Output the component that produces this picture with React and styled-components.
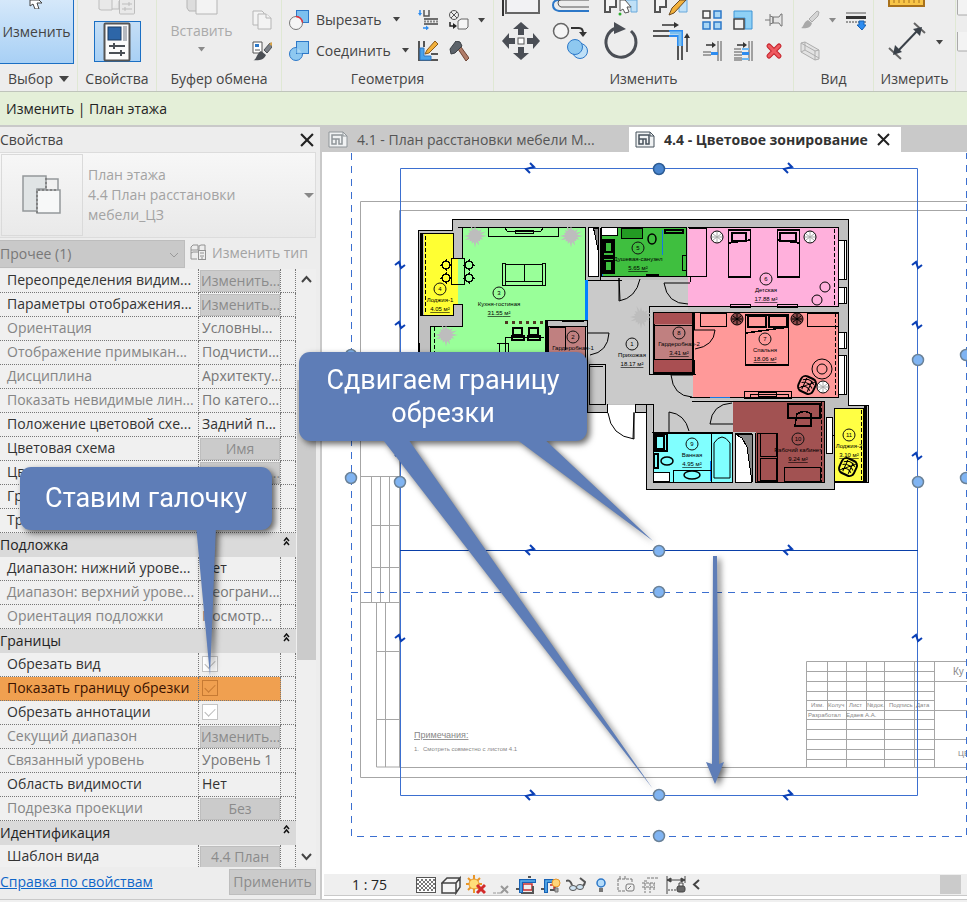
import React from 'react';
import styled, { createGlobalStyle, css } from 'styled-components';

const properties = [
	{ name: 'Переопределения видим...', button: 'Изменить...' },
	{ name: 'Параметры отображения...', button: 'Изменить...' },
	{ name: 'Ориентация', value: 'Условны...', muted: true },
	{ name: 'Отображение примыкан...', value: 'Подчисти...', muted: true },
	{ name: 'Дисциплина', value: 'Архитекту...', muted: true },
	{ name: 'Показать невидимые лин...', value: 'По катего...', muted: true },
	{ name: 'Положение цветовой схе...', value: 'Задний п...' },
	{ name: 'Цветовая схема', button: 'Имя' },
	{ name: 'Цветовые схемы', button: 'Изменить...' },
	{ name: 'Графика', value: '' },
	{ name: 'Траектория солнца', value: '' },
	{ group: 'Подложка' },
	{ name: 'Диапазон: нижний урове...', value: 'Нет' },
	{ name: 'Диапазон: верхний урове...', value: 'Неограни...', muted: true },
	{ name: 'Ориентация подложки', value: 'Посмотр...', muted: true },
	{ group: 'Границы' },
	{ name: 'Обрезать вид', check: true },
	{ name: 'Показать границу обрезки', check: true, active: true },
	{ name: 'Обрезать аннотации', check: true },
	{ name: 'Секущий диапазон', button: 'Изменить...', muted: true },
	{ name: 'Связанный уровень', value: 'Уровень 1', muted: true },
	{ name: 'Область видимости', value: 'Нет' },
	{ name: 'Подрезка проекции', button: 'Без', muted: true },
	{ group: 'Идентификация' },
	{ name: 'Шаблон вида', button: '4.4 План' },
];

const rooms = [
	{ id: 1, x: 632, y: 344, name: 'Прихожая', area: '18.17' },
	{ id: 2, x: 573, y: 337, name: 'Гардеробная-1', area: '2.90' },
	{ id: 3, x: 499, y: 293, name: 'Кухня-гостиная', area: '31.55' },
	{ id: 4, x: 440, y: 289, name: 'Лоджия-1', area: '4.05' },
	{ id: 5, x: 638, y: 248, name: 'Душевая-санузел', area: '5.65' },
	{ id: 6, x: 766, y: 279, name: 'Детская', area: '17.88' },
	{ id: 7, x: 765, y: 339, name: 'Спальня', area: '18.06' },
	{ id: 8, x: 679, y: 333, name: 'Гардеробная-2', area: '3.41' },
	{ id: 9, x: 692, y: 444, name: 'Ванная', area: '4.95' },
	{ id: 10, x: 798, y: 439, name: 'Рабочий кабинет', area: '9.24' },
	{ id: 11, x: 849, y: 435, name: 'Лоджия-2', area: '3.10' },
];

const grips = [
	[659, 551], [659, 592], [659, 795], [659, 836], [351, 355], [351, 478],
	[400, 482], [918, 360], [918, 482], [966, 355], [966, 478],
];

const starPoints = (cx, cy, r) =>
	Array.from({ length: 32 }, (_, i) => {
		const len = i % 2 ? r * 0.5 : r * (0.8 + 0.2 * Math.cos(i * 2.3));
		const a = (i * Math.PI) / 16;
		return `${(cx + len * Math.cos(a)).toFixed(1)},${(cy + len * Math.sin(a)).toFixed(1)}`;
	}).join(' ');

/* ---------- ribbon icons ---------- */

const Caret = ({ light }) => (
	<Svg width="7" height="5" viewBox="0 0 7 5">
		<path d="M0 0h7L3.500 4.500z" fill={light ? '#8a8a8a' : '#444'} />
	</Svg>
);

const CursorIcon = () => (
	<Svg width="16" height="9" viewBox="0 0 16 9">
		<path d="M1 0v6l3-2 2 5h4L8 3h5L10 0z" fill="#fff" stroke="#444" />
	</Svg>
);

const TypePropsIcon = () => (
	<Svg width="38" height="15" viewBox="0 0 38 15" fill="#e9e9e9" stroke="#bdbdbd">
		<path d="M1 0v9l2 1h11V0M14 9h7V1" />
		<rect x="21.500" y="-2" width="15" height="16" rx="1" />
		<path d="M24 4h10M24 9h10M31 2v4M27 7v4" />
	</Svg>
);

const PropertiesIcon = () => (
	<Svg width="28" height="40" viewBox="0 0 28 40">
		<rect x="1.500" y="1.500" width="25" height="37" rx="1" fill="#fbfbfb" stroke="#555" strokeWidth="2" />
		<rect x="5" y="5" width="13" height="13" fill="#2d66a8" stroke="#1d3c63" />
		<rect x="20" y="4" width="4" height="15" fill="#b5b9bf" />
		<path d="M6 24h16M6 31h16M11 21v6M18 28v6" stroke="#4a4f55" strokeWidth="2" />
	</Svg>
);

const PasteIcon = () => (
	<Svg width="32" height="15" viewBox="0 0 32 15">
		<path d="M1 0v8l2 3h8V0" fill="#ddd" stroke="#b5b5b5" />
		<path d="M10 0v14h21V0" fill="#f3f3f3" stroke="#b5b5b5" />
	</Svg>
);

const CopyIcon = () => (
	<Svg width="20" height="20" viewBox="0 0 20 20" fill="#f3f3f3" stroke="#b5b5b5">
		<path d="M1 1h9l2 2v12H1z" />
		<path d="M6 4h8l5 4v11H6z" />
		<path d="M14 4v4h5" />
	</Svg>
);

const MatchIcon = () => (
	<Svg width="20" height="20" viewBox="0 0 20 20">
		<path d="M1 1h9v11H1z" fill="#fff" stroke="#555" />
		<path d="M3 3h4v3H3z" fill="#2d78c8" />
		<path d="M3 9h5" stroke="#555" />
		<path d="M12 9l6-7 2 1v3l-5 6z" fill="#7b8087" stroke="#4d5156" />
		<path d="M17 3l3-2v4z" fill="#d9a44a" />
		<path d="M1 19c4 0 3-6 8-9l5 4c-2 5-8 6-13 5z" fill="#4b4f55" />
	</Svg>
);

const CutIcon = () => (
	<Svg width="20" height="20" viewBox="0 0 20 20">
		<rect x="7.500" y="0.500" width="12" height="12" fill="#7cc0ef" stroke="#2d78c8" />
		<circle cx="7" cy="13" r="6.500" fill="#f5f5f5" stroke="#777" />
		<path d="M7 6.500a6.500 6.500 0 0 1 6.500 6" fill="none" stroke="#e0323c" strokeWidth="1.500" />
	</Svg>
);

const JoinIcon = () => (
	<Svg width="20" height="20" viewBox="0 0 20 20" fill="#8ec8f0" stroke="#2d78c8">
		<circle cx="7" cy="13" r="6.500" />
		<rect x="7.500" y="0.500" width="12" height="12" />
		<path d="M8 7a6 6 0 0 1 5 5H8z" fill="#a9d6f5" stroke="#8ec8f0" />
	</Svg>
);

const CopingIcon = () => (
	<Svg width="20" height="20" viewBox="0 0 20 20">
		<path d="M6 0v6h5V0" fill="#eee" stroke="#555" strokeWidth="1.500" />
		<path d="M2 0v4M8 18h-3M5 18h5" stroke="#2d8cf0" strokeWidth="1.500" />
		<path d="M0 3h4L2 6zM8 15.500v5l3-2.500z" fill="#2d8cf0" />
		<path d="M6 9h14M6 14h14" stroke="#444" strokeWidth="1.500" />
		<path d="M6 11.500h14" stroke="#888" strokeDasharray="2 1" strokeWidth="2" />
	</Svg>
);

const SplitFaceIcon = () => (
	<Svg width="20" height="20" viewBox="0 0 20 20">
		<circle cx="5" cy="5" r="4.500" fill="#eee" stroke="#555" />
		<path d="M2 2l6 6M8 2L2 8" stroke="#555" />
		<path d="M1 12v4h5" fill="none" stroke="#222" strokeWidth="1.500" />
		<path d="M4 13l4 3-4 3z" fill="#222" />
		<path d="M9 11l3-2h7v8l-2 2H9z" fill="#f5f5f5" stroke="#666" />
	</Svg>
);

const WallJoinIcon = () => (
	<Svg width="20" height="20" viewBox="0 0 20 20">
		<path d="M1 0v20M1 19h19M6 0v6M13 13h7" stroke="#555" strokeWidth="2" />
		<path d="M2 7h4v8h7v4H2z" fill="#4aa3ea" stroke="#2d78c8" />
		<path d="M7 13l2-4 8-9 3 3-9 9z" fill="#f2b13c" stroke="#8a5a1c" />
	</Svg>
);

const HammerIcon = () => (
	<Svg width="20" height="20" viewBox="0 0 20 20">
		<path d="M9 8l3-2 8 11-3 3z" fill="#b07c68" stroke="#6d4233" />
		<path d="M1 8l6-8 4 1 2 4-7 7-4 1z" fill="#5c636a" stroke="#3b4045" />
	</Svg>
);

const AlignIcon = () => (
	<Svg width="38" height="16" viewBox="0 0 38 16">
		<path d="M1 0v16" stroke="#333" strokeWidth="2" />
		<path d="M4 0v13h33V0" fill="#f2f2f4" stroke="#666" strokeWidth="2" />
	</Svg>
);

const OffsetIcon = () => (
	<Svg width="38" height="16" viewBox="0 0 38 16" fill="none">
		<path d="M37 11H7Q1 10 1 5t6-5" stroke="#2d78c8" strokeWidth="2" />
		<path d="M37 7H9Q6 6 6 3t3-3M9 0h28" stroke="#555" />
	</Svg>
);

const MirrorPickIcon = () => (
	<Svg width="36" height="16" viewBox="0 0 36 16">
		<path d="M2 0v12h5V7h6V0" fill="#f5f5f5" stroke="#555" strokeWidth="2" />
		<path d="M21 0h13v12h-6V6" fill="#bfe0f7" stroke="#69a9db" />
		<path d="M17 0v11l3-2 2 4 4-1-2-5h4l-6-7z" fill="#fff" stroke="#555" />
		<circle cx="17" cy="14" r="1.500" fill="#2fae2f" />
	</Svg>
);

const MirrorDrawIcon = () => (
	<Svg width="36" height="16" viewBox="0 0 36 16">
		<path d="M2 0v12h5V7h6V0" fill="#f5f5f5" stroke="#555" strokeWidth="2" />
		<path d="M27 0h7v12h-8V6" fill="#bfe0f7" stroke="#69a9db" />
		<path d="M16 15l3-7 8-8h6L21 13z" fill="#f2b13c" stroke="#6b4a22" />
	</Svg>
);

const MoveIcon = () => (
	<Svg width="38" height="38" viewBox="0 0 38 38" fill="#4a4e55">
		<path d="M19 0l8 7h-5v6h-6V7h-5zM19 38l8-7h-5v-6h-6v6h-5zM0 19l7-8v5h6v6H7v5zM38 19l-7-8v5h-6v6h6v5z" />
		<rect x="16" y="16" width="6" height="6" fill="#fff" stroke="#555" />
	</Svg>
);

const CopyShapeIcon = () => (
	<Svg width="38" height="38" viewBox="0 0 38 38">
		<circle cx="9" cy="9" r="7.500" fill="#f5f5f5" stroke="#666" strokeWidth="1.500" />
		<path d="M19 6h8q4 0 4 5" fill="none" stroke="#333" strokeWidth="2" />
		<path d="M27 10h8l-4 5z" fill="#333" />
		<circle cx="28" cy="29" r="7.500" fill="#bfe0f7" stroke="#2d78c8" />
		<circle cx="23" cy="25" r="7.500" fill="#8ec8f0" stroke="#2d78c8" />
	</Svg>
);

const RotateIcon = () => (
	<Svg width="38" height="38" viewBox="0 0 38 38">
		<path d="M14 6a15 15 0 1 0 15 3" fill="none" stroke="#4a4e55" strokeWidth="3" />
		<path d="M12 0l12 7-12 5z" fill="#4a4e55" />
	</Svg>
);

const TrimIcon = () => (
	<Svg width="38" height="38" viewBox="0 0 38 38">
		<path d="M1 9h16M1 14h16M26 24v14M30 24v14" stroke="#555" strokeWidth="2" />
		<path d="M17 9h13v15M17 14h9v10" fill="none" stroke="#2d8cf0" strokeWidth="2" />
		<path d="M18 11h10v13" fill="none" stroke="#7cc0ef" strokeWidth="3" />
		<path d="M10 3h14M35 30V14" stroke="#333" strokeWidth="1.500" />
		<path d="M22 0l5 3-5 3zM32 16l3-5 3 5z" fill="#333" />
	</Svg>
);

const ArrayIcon = () => (
	<Svg width="20" height="20" viewBox="0 0 20 20" fill="#a9d6f5" stroke="#2d78c8" strokeWidth="1.500">
		<rect x="1" y="1" width="7" height="7" fill="#f5f5f5" stroke="#444" />
		<rect x="12" y="1" width="7" height="7" />
		<rect x="1" y="12" width="7" height="7" />
		<rect x="12" y="12" width="7" height="7" />
	</Svg>
);

const ScaleIcon = () => (
	<Svg width="20" height="20" viewBox="0 0 20 20">
		<path d="M1 8V1h18v18h-7V8z" fill="#8ed0f5" stroke="#3c94d6" />
		<rect x="1" y="9" width="10" height="10" fill="#f0f0f0" stroke="#444" strokeWidth="1.500" />
	</Svg>
);

const PinIcon = () => (
	<Svg width="18" height="14" viewBox="0 0 18 14">
		<path d="M0 7h5M5 1v12M5 3l3 1v6l-3 1M8 4h6l2-3h1v12h-1l-2-3H8z" fill="#e5e5e5" stroke="#777" />
	</Svg>
);

const ExtendIcon = ({ many }) => (
	<Svg width="20" height="20" viewBox="0 0 20 20">
		<path d="M16 0v20M19 0v20" stroke="#555" />
		<path d="M4 4h7" stroke="#333" strokeWidth="1.500" />
		<path d="M10 1l4 3-4 3z" fill="#333" />
		<path d="M1 11h8M1 14h8" stroke="#555" />
		<path d="M9 12.500h7" stroke="#2d8cf0" strokeWidth="3" />
		{many && <path d="M1 8h7M1 17h8M1 19h8" stroke="#555" />}
		{many && <path d="M9 8h7M9 18h7" stroke="#6bb6f2" strokeWidth="2" />}
	</Svg>
);

const DeleteIcon = () => (
	<Svg width="18" height="18" viewBox="0 0 18 18">
		<path d="M4 4l10 10M14 4L4 14" stroke="#c4222b" strokeWidth="5" strokeLinecap="round" />
		<path d="M4 4l10 10M14 4L4 14" stroke="#ee5a60" strokeWidth="3" strokeLinecap="round" />
	</Svg>
);

const BrushIcon = () => (
	<Svg width="20" height="20" viewBox="0 0 20 20">
		<path d="M9 9l8-8 2 1-1 4-6 6z" fill="#d5d5d5" stroke="#ababab" />
		<path d="M1 18c3-1 2-6 7-8l4 3c-1 5-7 6-11 5z" fill="#a9a9a9" />
	</Svg>
);

const LinesIcon = () => (
	<Svg width="20" height="20" viewBox="0 0 20 20">
		<path d="M0 3h20" stroke="#555" />
		<path d="M0 7.500h20" stroke="#333" strokeWidth="3" />
		<path d="M0 12h20" stroke="#444" strokeDasharray="2 1" />
		<path d="M13 11h5v4h2l-4 5-5-5h2z" fill="#2d8cf0" stroke="#1762b5" />
	</Svg>
);

const BoxIcon = () => (
	<Svg width="20" height="20" viewBox="0 0 20 20">
		<path d="M1 2l4-1 14 8v9l-4 1-14-8zM1 2l14 8v9M15 10l4-1M5 1v8l14 8M5 9l-4 2" fill="#e2e2e2" stroke="#adadad" />
	</Svg>
);

const RulerIcon = () => (
	<Svg width="38" height="8" viewBox="0 0 38 8">
		<path d="M1 0v6h35V0" fill="#f8c548" stroke="#a8711c" strokeWidth="2" />
		<path d="M6 0v3M11 0v3M16 0v3M21 0v3M26 0v3M31 0v3" stroke="#a8711c" />
	</Svg>
);

const MeasureIcon = () => (
	<Svg width="38" height="38" viewBox="0 0 38 38">
		<path d="M1 26l12 11M26 1l11 10" stroke="#666" strokeWidth="2" />
		<path d="M9 30L30 8" stroke="#3a4149" strokeWidth="2" />
		<path d="M5 33l2-10 7 7zM34 5l-2 9-7-7z" fill="#3a4149" />
	</Svg>
);

const SlabIcon = ({ h }) => (
	<Svg width="10" height={h} viewBox={`0 0 10 ${h}`}>
		<rect x="0.500" y="-2" width="14" height={h + 1} rx="1" fill="#f3f3f3" stroke="#aaa" />
	</Svg>
);

/* ---------- palette and tab icons ---------- */

const CloseIcon = ({ size = 13 }) => (
	<Svg width={size} height={size} viewBox="0 0 13 13">
		<path d="M1 1l11 11M12 1L1 12" stroke="#222" strokeWidth="2" />
	</Svg>
);

const FamilyIcon = () => (
	<Svg width="40" height="40" viewBox="0 0 40 40" strokeWidth="1.500">
		<path d="M1 1h23v13H15v22H1z" fill="#e0e4e5" stroke="#94989a" />
		<path d="M24 4h12v11" fill="#f0f0f0" stroke="#94989a" />
		<path d="M15 15h23v23H15z" fill="#f7f8f8" stroke="#94989a" />
		<path d="M15 38V15h21M24 3v12" fill="none" stroke="#777" strokeDasharray="2 2" />
	</Svg>
);

const EditTypeIcon = () => (
	<Svg width="17" height="17" viewBox="0 0 17 17" fill="none" stroke="#929292">
		<path d="M1 3l2-2h5v5H1zM9 6V2l2-1h4v5M1 6v9h6M1 9l2-1h5" />
		<rect x="8.500" y="6.500" width="7" height="9" fill="#eee" />
		<path d="M10 9h4M10 12h4M11 14h2" />
	</Svg>
);

const SheetIcon = ({ color }) => (
	<Svg width="20" height="17" viewBox="0 0 20 17" fill="none" stroke={color}>
		<path d="M1 1h14l4 4v11H1z" fill="#f0f2f3" />
		<path d="M15 1v4h4" />
		<path d="M4 8V4h10v9h-3V8H4v5h4V8" strokeWidth="1.500" />
	</Svg>
);

const ChevronIcon = ({ dir }) => (
	<Svg width="11" height="11" viewBox="0 0 11 11" fill="none" stroke="#444" strokeWidth="2">
		{dir === 'up' && <path d="M1 8l4.500-5L10 8" />}
		{dir === 'down' && <path d="M1 3l4.500 5L10 3" />}
		{dir === 'left' && <path d="M8 1L3 5.500 8 10" />}
	</Svg>
);

const CollapseIcon = () => (
	<Svg width="7" height="9" viewBox="0 0 7 9" fill="none" stroke="#111" strokeWidth="1.500">
		<path d="M1 4l2.500-3L6 4M1 8l2.500-3L6 8" />
	</Svg>
);

/* ---------- view bar icons ---------- */

const viewIcons = [
	<g key="detail">
		<rect x="0.500" y="2.500" width="19" height="15" fill="#fff" stroke="#555" />
		<path d="M1 5h18M1 9h18M1 13h18" stroke="#777" strokeWidth="2" strokeDasharray="2 2" />
		<path d="M3 7h16M3 11h16M3 15h16" stroke="#777" strokeWidth="2" strokeDasharray="2 2" />
	</g>,
	<g key="style" stroke="#444" strokeWidth="1.500" fill="#f5f5f5">
		<path d="M1 8l5-5h13l-4 5zM1 8h14v10H1zM15 8l4-5v9l-4 6z" />
	</g>,
	<g key="sun">
		<path d="M8 0v18M0 9h16M2 3l12 12M14 3L2 15" stroke="#e8962a" strokeWidth="2" />
		<circle cx="8" cy="9" r="5" fill="#ffdf7a" stroke="#e8962a" />
		<path d="M11 10l8 8M19 10l-8 8" stroke="#d32b2b" strokeWidth="3" />
	</g>,
	<g key="shadow" stroke="#999">
		<path d="M2 18h3M6 18h4" />
		<path d="M10 11l7 7M17 11l-7 7" strokeWidth="2" />
	</g>,
	<g key="crop" fill="none">
		<path d="M7 9h9v6H7z" stroke="#c93030" strokeWidth="1.500" />
		<path d="M0 14h6M5 18h12v-7M12 2h3" stroke="#555" strokeWidth="2" />
		<path d="M5 18V6h15" stroke="#1762b5" strokeWidth="4" />
		<path d="M5 17V6h14" stroke="#5cb3ee" strokeWidth="1.500" />
	</g>,
	<g key="cropview" fill="none">
		<path d="M0 14h6M9 15h5v-5" stroke="#555" strokeWidth="2" />
		<path d="M5 18V6h10" stroke="#1762b5" strokeWidth="4" />
		<path d="M5 17V6h10" stroke="#5cb3ee" strokeWidth="1.500" />
		<path d="M9 10h4v4" stroke="#c93030" strokeWidth="1.500" />
		<circle cx="15" cy="8" r="4" fill="#ffd67a" stroke="#e8962a" />
		<path d="M14 13h3v4h-3z" fill="#aaa" stroke="#777" />
	</g>,
	<g key="glasses" stroke="#555" fill="#cfe3f2">
		<path d="M0 6q4-2 6 4M11 12q7 1 8-5l-5-4" fill="none" strokeWidth="2" />
		<ellipse cx="7" cy="13" rx="3.500" ry="2.500" />
		<ellipse cx="14" cy="12" rx="3.500" ry="2.500" />
	</g>,
	<g key="bulb">
		<circle cx="10" cy="8" r="4" fill="#b5dcfa" stroke="#2d78c8" strokeWidth="1.500" />
		<path d="M8 13h4v4H8z" fill="#777" />
	</g>,
	<g key="template" stroke="#777" fill="none">
		<path d="M2 4h14M2 4v12h8M16 4v3M4 1v3M9 1v3" strokeDasharray="3 1" />
		<rect x="10" y="9" width="8" height="7" rx="2" />
		<path d="M12 14l3-3" />
	</g>,
	<g key="analytic" stroke="#777" fill="none">
		<path d="M1 8h13M1 12h13M4 8v10M9 8v10M13 8v8M6 3h12M3 6h3" strokeDasharray="3 1" />
	</g>,
	<g key="constraints" stroke="#444" fill="none">
		<path d="M1 1v18M19 1v7M1 5h18" />
		<path d="M1 5l4-2v4zM19 5l-4-2v4z" fill="#444" />
		<path d="M2 15h8" strokeDasharray="2 1" />
		<rect x="11" y="11" width="8" height="6" rx="2" fill="#666" />
		<path d="M13 11V8h4v3" />
	</g>,
];

/* ---------- floor plan ---------- */

const Spark = ({ x, y, side }) => (
	<path
		transform={`translate(${x} ${y})`}
		d={side ? 'M-5 0L-1-3L1 3L5 0' : 'M0-5L4-1L-4 1L0 5'}
		fill="none"
		stroke="#0a3fb5"
		strokeWidth="2"
	/>
);

const RoomTag = ({ room }) => (
	<g>
		<circle cx={room.x} cy={room.y} r="6" fill="none" stroke="#111" />
		<TagText x={room.x} y={room.y + 2}>{room.id}</TagText>
		<TagText x={room.x} y={room.y + 13}>{room.name}</TagText>
		<TagText x={room.x} y={room.y + 22} $line>{room.area} м²</TagText>
	</g>
);

const SheetLines = () => (
	<g fill="none" stroke="#a6a6a6">
		<path d="M967 201.500H360.500V777.500H967M967 210.500H399.500V767.500H967" />
		<path d="M361 476.500H399M371.500 476V602M380.500 476V602M389.500 476V602M371 525.500H399M371 567.500H399M361 602.500H399" />
		<path d="M376.500 602V767H399M385.500 602V767M376 651.500H399M376 719.500H399" />
		<path d="M806.500 767V661.500H967M846.500 661V767M884.500 661V767M914.500 661V767M934.500 661V767M827.500 661V710M866.500 661V710" />
		<path d="M806 671.500H934M806 681.500H967M806 691.500H934M806 700.500H934M806 710.500H967M806 719.500H934M806 729.500H934M806 739.500H967M806 749.500H934M806 759.500H934" />
	</g>
);

const SheetTexts = () => (
	<g>
		<NoteText x="414" y="738" $size={9} $line>Примечания:</NoteText>
		<NoteText x="414" y="751">1.</NoteText>
		<NoteText x="423" y="751">Смотреть совместно с листом 4.1</NoteText>
		<NoteText x="811" y="707">Изм.</NoteText>
		<NoteText x="828" y="707">Колуч</NoteText>
		<NoteText x="849" y="707">Лист</NoteText>
		<NoteText x="867" y="707">№док.</NoteText>
		<NoteText x="889" y="707">Подпись</NoteText>
		<NoteText x="916" y="707">Дата</NoteText>
		<NoteText x="808" y="717">Разработал</NoteText>
		<NoteText x="846" y="717">Едаев А.А.</NoteText>
		<NoteText x="953" y="675" $size={10}>Ку</NoteText>
		<NoteText x="958" y="756" $size={8}>ЦВ</NoteText>
	</g>
);

const Chair = ({ x, y }) => (
	<g fill="none" stroke="#000">
		<circle cx={x} cy={y} r="4" strokeWidth="1.500" />
		<path d={`M${x - 6} ${y}h3M${x + 3} ${y}h3M${x} ${y - 6}v3M${x} ${y + 3}v3`} />
	</g>
);

const Armchair = ({ x, y }) => (
	<g transform={`translate(${x} ${y}) rotate(25)`} fill="none" stroke="#000">
		<rect x="-8" y="-8" width="16" height="16" rx="5" strokeWidth="2" />
		<path d="M-6-3q6-5 12 0M-6 0q6-4 12 1M-5 4q5-4 10 0M-3-6v12M3-6v12M-6 6L6-6" />
	</g>
);

const Lamp = ({ x, y, fill }) => (
	<g stroke="#000" fill={fill}>
		<circle cx={x} cy={y} r="6" />
		<path d={`M${x - 4} ${y - 3}l8 6M${x - 4} ${y + 3}l8-6M${x} ${y - 5}v10M${x - 5} ${y}h10`} stroke={fill === '#fff' ? '#aaa' : '#000'} />
	</g>
);

const FloorPlan = () => (
	<g shapeRendering="crispEdges">
		<path d="M452.500 219.500H848.500V405.500H868.500V482.500H834.500V489.500H646.500V412.500H418.500V230.500H452.500z" fill="#c0c0c0" stroke="#000" />
		<path d="M588 280H688V310H652V374H694V400H733V432H652V404H588z" fill="#cacaca" />
		<path d="M607 405h28v8h-28z" fill="#fff" />

		<path d="M462.500 227.500H585.500V320.500H546.500V441H430.500V326.500H462.500V305H458V258H462.500z" fill="#9f9" />
		<path d="M423.500 233.500H453V258H458V305H453V315.500H423.500z" fill="#ff3" />
		<path d="M601.500 227.500H686.500V276.500H601.500z" fill="#3fbf3f" stroke="#000" />
		<path d="M688 227.500H838.500V306.500H688z" fill="#ffb0dc" />
		<path d="M693 312.500H838.500V397.500H693z" fill="#f99" />
		<path d="M733 401.500H824.500V482.500H755.500V432H733z" fill="#a25252" />
		<path d="M653.500 433.500H732.500V482.500H653.500z" fill="#80ffff" stroke="#000" />
		<path d="M834.500 408.500H863V481.500H834.500z" fill="#ff4" stroke="#000" />
		<path d="M548.500 326.500H585.500V380H548.500z" fill="#c08080" stroke="#000" />
		<path d="M653.500 312.500H692.500V372.500H653.500z" fill="#c08080" stroke="#000" strokeWidth="2" />

		<g fill="none" stroke="#000">
			<path d="M458 227.500H585.500V320M462.500 227V258M453 258V233.500H420M453 315.500V304.500H462.500V326.500H430.500V441M420 315.500H453M546.500 441V320.500H587.500V326.500H546" />
			<path d="M688 227.500H838.500V306.500M649 306.500H838M649 306.500V374.500H696M693 312.500H838.500V397.500H690M824.500 482.500V401.500H692M755 432.500V482.500H824M733 432.500H652M646.500 404.500V412M635.500 404.500H653V433" />
			<path d="M587 280.500H622M587.500 326V412M644 276.500H690V282M588 412.500H607V404M635.500 412V404M694 312V330M694 360V374M600 280V228" />
			<path d="M421.500 233V315M865.500 405V482M546.500 320V360" strokeWidth="3" />
			<path d="M425.500 236V314M434.500 327V352M834.500 229V306M835 313V396M821 402V482M861 410V480M649 308V372" strokeDasharray="4 2" />
			<path d="M562 320.500h22" strokeWidth="2" />
		</g>

		{/* shafts, windows */}
		<path d="M588.500 227.500H598.500V276.500H588.500z" fill="#fff" stroke="#000" />
		<path d="M593.500 228H598V250z" fill="#888" stroke="#000" />
		<path d="M735.500 433.500H751.500V482.500H735.500z" fill="#fff" stroke="#000" />
		<path d="M735 434H752V482L747 447L742 438z" fill="#888" stroke="#000" />
		<g fill="#fff" stroke="#000">
			<path d="M838.500 240.500h8v39h-8zM838.500 287.500h8v16h-8zM838.500 332.500h8v16h-8zM838.500 355.500h8v39h-8z" />
			<path d="M844.500 241v38M844.500 288v15M844.500 333v15M844.500 356v38M830 417V453M827 435h8" />
			<path d="M601.500 227.500h16v8h-16zM653.500 472.500h16v9h-16zM419.500 343v24M826.500 417h6v36h-6z" />
		</g>
		<path d="M586.500 280V320" stroke="#0080ff" strokeWidth="3" />
		<path d="M711 461V481" stroke="#0080ff" strokeWidth="2" />
		<path d="M602 258V276M662 230V255M710 397.500h20" stroke="#1478e6" />

		{/* plants */}
		<g fill="#bdbdbd" shapeRendering="auto">
			<polygon points={starPoints(475, 236, 12)} />
			<polygon points={starPoints(571, 236, 12)} />
			<polygon points={starPoints(446, 335, 12)} />
			<polygon points={starPoints(641, 317, 12)} />
		</g>

		{/* furniture */}
		<g fill="none" stroke="#000">
			<path d="M488.500 228V236.500H558.500V228M505 228l2 3h34l2-3M515 230h18v3h-18z" />
			<path d="M502.500 263.500h3v22h-3zM542.500 263.500h3v22h-3zM505 264.500h37v17h-37zM505 281h37v4h-37zM524 265v17" />
			<path d="M451.500 258.500h13v26h-13z" />
			<path d="M505 322h40" stroke="#4d331f" strokeWidth="3" strokeDasharray="3 4" />
			<path d="M513 328h9v7h-9zM529 328h9v7h-9zM512 336h12v4h-12zM528 336h12v4h-12z" strokeWidth="2" />
			<path d="M505.500 352V337H544M497 343h11v9M499 343v9" strokeWidth="1" />
			<path d="M565 327V350M550 327h16" strokeWidth="1" />
			<path d="M589 364h16v40h-16zM589 366h14" />
			<path d="M621 228h21v10h-21z" fill="#239b23" />
			<path d="M603 240h11v16h-11zM605 242h7v10h-7zM603 258h11v15h-11zM605 261h7v10h-7z" strokeWidth="1.500" />
			<path d="M665 230h18v3h-18zM646 275h13" strokeWidth="2" />
			<path d="M682.500 255h4v15h-4z" />
			<path d="M689 228h17v48h-17" />
			<path d="M728.500 230h22v47h-22zM732 233h14v8h-14zM729 243l21-3M777.500 230h22v47h-22zM780 233h16v8h-16zM778 240l21 3" strokeWidth="1.500" />
			<path d="M730 304h20v3h-20zM777 304h20v3h-20z" />
			<path d="M700 313h26v13h-26zM807 313h31v13h-31z" />
			<path d="M745.500 315h43v50h-43zM748 316h18v11h-18zM769 316h18v11h-18zM746 333l43-6" strokeWidth="1.500" />
			<path d="M744 391h47v7h-47zM750 394h38v3h-38zM758 392h18v4h-18z" />
			<path d="M788 404h32v14h-32zM797 414q8-5 14 0v12h-16z" strokeWidth="1.500" />
			<path d="M757 433h20v48h-20zM760 433h16v23h-16zM760 458h16v22h-16zM784 467h36v14h-36z" />
			<path d="M711.500 434V482M673 470h38M673 470v12" />
			<path d="M654 434h13v17h-13zM656 436h8v13h-8zM654 454h4v14h-4z" strokeWidth="1.500" />
			<path d="M654 325h38M654 359h38" />
		</g>
		<path d="M654 313h38v11h-38zM654 360h38v12h-38z" fill="#a94f52" />
		<g fill="none" stroke="#000" shapeRendering="auto">
			<ellipse cx="652" cy="239" rx="4" ry="5" strokeWidth="1.500" />
			<path d="M714 478V443q8-12 16 0V478z" />
			<ellipse cx="667" cy="461" rx="6" ry="4" strokeWidth="1.500" />
			<ellipse cx="692" cy="475" rx="8" ry="4" strokeWidth="1.500" />
			<circle cx="825" cy="287" r="5" />
			<circle cx="817" cy="300" r="5" />
			<circle cx="822" cy="369" r="10" />
			<circle cx="822" cy="369" r="5" />
			<path d="M619 278V301Q636 298 640 279M619 278l1 22" />
			<path d="M690 283H664Q667 304 688 304" />
			<path d="M588 333H609Q608 352 590 355" />
			<path d="M693 330H715Q714 346 695 349" />
			<path d="M693 375H671Q673 396 692 397" />
			<path d="M733 424H710Q712 404 732 403" />
			<path d="M669 433V412Q685 414 689 431" />
			<path d="M634 412V439Q611 436 608 413M634 413l-1 26" />
		</g>
		<Chair x={446} y={265} />
		<Chair x={446} y={278} />
		<Chair x={469} y={265} />
		<Chair x={469} y={278} />
		<g shapeRendering="auto">
			<Lamp x={717} y={237} fill="#fff" />
			<Lamp x={810} y={237} fill="#fff" />
			<Lamp x={737} y={319} fill="#8c4a4a" />
			<Lamp x={797} y={319} fill="#8c4a4a" />
			<Lamp x={823} y={387} fill="#fff" />
			<Armchair x={807} y={385} />
			<Armchair x={848} y={467} />
			{rooms.map((room) => (
				<RoomTag key={room.id} room={room} />
			))}
		</g>
	</g>
);

const Drawing = () => (
	<Svg width="645" height="722" viewBox="322 152 645 722">
		<SheetLines />
		<SheetTexts />
		<FloorPlan />
		<g fill="none" stroke="#3b6fd0">
			<path d="M400.500 168.500H917.500V795.500H400.500z" />
			<path d="M400 550.500H918" stroke="#0a3fa8" />
			<path d="M351.500 153V836.500H966.500V153" strokeDasharray="7 6" />
			<path d="M351 592.500H967" strokeDasharray="7 6" />
		</g>
		{[168, 550, 795].map((y) => (
			<g key={y}>
				<Spark x={530} y={y} />
				<Spark x={788} y={y} />
			</g>
		))}
		{[400, 917].map((x) => (
			<g key={x}>
				<Spark side x={x} y={265} />
				<Spark side x={x} y={325} />
				<Spark side x={x} y={456} />
				<Spark side x={x} y={638} />
			</g>
		))}
		<circle cx="659" cy="169" r="5.500" fill="#4a86cf" stroke="#2d5c94" strokeWidth="1.500" />
		{grips.map(([x, y]) => (
			<circle key={`${x}-${y}`} cx={x} cy={y} r="5.500" fill="#80b4f2" stroke="#6b8298" strokeWidth="1.500" />
		))}
	</Svg>
);

/* ---------- page parts ---------- */

const Ribbon = () => (
	<RibbonBar>
		<Panel $w={78}>
			<PanelBody>
				<ModifyButton>
					<CursorIcon />
					Изменить
				</ModifyButton>
			</PanelBody>
			<Caption>Выбор <Svg width="10" height="6" viewBox="0 0 10 6"><path d="M0 0h10L5 6z" fill="#444" /></Svg></Caption>
		</Panel>
		<Panel $w={79}>
			<PanelBody>
				<Stack $gap={6}>
					<IconButton aria-label="Свойства типа"><TypePropsIcon /></IconButton>
					<PressedButton aria-label="Свойства"><PropertiesIcon /></PressedButton>
				</Stack>
			</PanelBody>
			<Caption>Свойства</Caption>
		</Panel>
		<Panel $w={125}>
			<PanelBody>
				<PasteButton>
					<PasteIcon />
					Вставить
					<Caret light />
				</PasteButton>
				<SmallGrid $cols={1}>
					<IconButton aria-label="Копировать"><CopyIcon /></IconButton>
					<IconButton aria-label="Согласовать"><MatchIcon /></IconButton>
				</SmallGrid>
			</PanelBody>
			<Caption>Буфер обмена</Caption>
		</Panel>
		<Panel $w={212}>
			<PanelBody $pad={7}>
				<CommandColumn>
					<CommandButton><CutIcon />Вырезать<Caret /></CommandButton>
					<CommandButton><JoinIcon />Соединить<Caret /></CommandButton>
				</CommandColumn>
				<SmallGrid $cols={2}>
					<IconButton aria-label="Обработка торцов"><CopingIcon /></IconButton>
					<IconButton aria-label="Разделить грань"><SplitFaceIcon /></IconButton>
					<IconButton aria-label="Соединения стен"><WallJoinIcon /></IconButton>
					<IconButton aria-label="Снести"><HammerIcon /></IconButton>
				</SmallGrid>
				<CaretSlot><Caret /></CaretSlot>
			</PanelBody>
			<Caption>Геометрия</Caption>
		</Panel>
		<Panel $w={300}>
			<PanelBody $pad={2}>
				<LargeGrid $cols={4}>
					<IconButton aria-label="Выровнять"><AlignIcon /></IconButton>
					<IconButton aria-label="Смещение"><OffsetIcon /></IconButton>
					<IconButton aria-label="Зеркало - выбрать ось"><MirrorPickIcon /></IconButton>
					<IconButton aria-label="Зеркало - нарисовать ось"><MirrorDrawIcon /></IconButton>
					<IconButton aria-label="Перенести"><MoveIcon /></IconButton>
					<IconButton aria-label="Копировать"><CopyShapeIcon /></IconButton>
					<IconButton aria-label="Повернуть"><RotateIcon /></IconButton>
					<IconButton aria-label="Обрезать"><TrimIcon /></IconButton>
				</LargeGrid>
				<SmallGrid $cols={3}>
					<IconButton aria-label="Массив"><ArrayIcon /></IconButton>
					<IconButton aria-label="Масштаб"><ScaleIcon /></IconButton>
					<IconButton aria-label="Прикрепить"><PinIcon /></IconButton>
					<IconButton aria-label="Удлинить"><ExtendIcon /></IconButton>
					<IconButton aria-label="Удлинить несколько"><ExtendIcon many /></IconButton>
					<IconButton aria-label="Удалить"><DeleteIcon /></IconButton>
				</SmallGrid>
			</PanelBody>
			<Caption>Изменить</Caption>
		</Panel>
		<Panel $w={80}>
			<PanelBody>
				<SmallGrid $cols={1}>
					<IconButton aria-label="Кисть"><BrushIcon /></IconButton>
					<IconButton aria-label="Скрыть"><BoxIcon /></IconButton>
				</SmallGrid>
				<CaretSlot><Caret light /></CaretSlot>
				<SmallGrid $cols={1}>
					<IconButton aria-label="Линии"><LinesIcon /></IconButton>
				</SmallGrid>
			</PanelBody>
			<Caption>Вид</Caption>
		</Panel>
		<Panel $w={82}>
			<PanelBody $pad={8}>
				<LargeGrid $cols={1}>
					<IconButton aria-label="Линейка"><RulerIcon /></IconButton>
					<IconButton aria-label="Размер"><MeasureIcon /></IconButton>
				</LargeGrid>
				<CaretSlot $low><Caret /></CaretSlot>
			</PanelBody>
			<Caption>Измерить</Caption>
		</Panel>
		<LastPanel>
			<SlabIcon h={16} />
			<SlabIcon h={20} />
		</LastPanel>
	</RibbonBar>
);

const PropertyRow = ({ item, index }) => {
	const id = `prop-${index}`;
	if (item.group) {
		return (
			<tr>
				<GroupCell colSpan="3">
					<GroupTitle>{item.group}<CollapseIcon /></GroupTitle>
				</GroupCell>
			</tr>
		);
	}
	return (
		<tr>
			<NameCell $muted={item.muted} $active={item.active}>
				{item.check ? <label htmlFor={id}>{item.name}</label> : item.name}
			</NameCell>
			<ValueCell $muted={item.muted} $active={item.active} $flush={!!item.button}>
				{item.button && <ValueButton>{item.button}</ValueButton>}
				{item.check && <CheckBox id={id} type="checkbox" defaultChecked $active={item.active} />}
				{item.value}
			</ValueCell>
			<LinkCell />
		</tr>
	);
};

const Properties = () => (
	<Palette>
		<PaletteHeader>
			Свойства
			<IconButton aria-label="Закрыть"><CloseIcon size={14} /></IconButton>
		</PaletteHeader>
		<TypeSelector>
			<TypePreview><FamilyIcon /></TypePreview>
			<TypeName>План этажа<br />4.4 План расстановки<br />мебели_ЦЗ</TypeName>
			<Svg width="10" height="5" viewBox="0 0 10 5"><path d="M0 0h10L5 5z" fill="#888" /></Svg>
		</TypeSelector>
		<FilterRow>
			<FilterSelect aria-label="Фильтр" defaultValue="other">
				<option value="other">Прочее (1)</option>
			</FilterSelect>
			<EditTypeButton><EditTypeIcon />Изменить тип</EditTypeButton>
		</FilterRow>
		<PropertyArea>
			<TableClip>
				<PropertyTable>
					<colgroup>
						<col width="199" />
						<col width="82" />
						<col width="15" />
					</colgroup>
					<tbody>
						{properties.map((item, i) => (
							<PropertyRow key={i} index={i} item={item} />
						))}
					</tbody>
				</PropertyTable>
			</TableClip>
			<ScrollTrack>
				<ChevronIcon dir="up" />
				<ScrollThumb />
				<ChevronIcon dir="down" />
			</ScrollTrack>
		</PropertyArea>
		<PaletteFooter>
			<HelpLink href="#help">Справка по свойствам</HelpLink>
			<ApplyButton>Применить</ApplyButton>
		</PaletteFooter>
	</Palette>
);

const App = () => (
	<>
		<GlobalStyle />
		<Page>
			<Ribbon />
			<OptionsBar>Изменить | План этажа</OptionsBar>
			<Workspace>
				<Properties />
				<ViewArea>
					<Tabs>
						<Tab><SheetIcon color="#8f9599" />4.1 - План расстановки мебели М...</Tab>
						<Tab $active><SheetIcon color="#47525c" />4.4 - Цветовое зонирование<CloseIcon /></Tab>
					</Tabs>
					<Canvas><Drawing /></Canvas>
					<ViewBar>
						<ScaleButton>1 : 75</ScaleButton>
						{viewIcons.map((icon) => (
							<ViewButton key={icon.key} aria-label={icon.key}>
								<Svg width="20" height="20" viewBox="0 0 20 20">{icon}</Svg>
							</ViewButton>
						))}
						<ChevronIcon dir="left" />
						<HorizontalThumb />
					</ViewBar>
				</ViewArea>
			</Workspace>
			<Callout>
				<Tails width="700" height="800" viewBox="0 0 700 800">
					<path d="M196 525H216L210 676z" />
				</Tails>
				<Bubble $x={20} $y={467} $w={252} $h={63}>Ставим галочку</Bubble>
			</Callout>
			<Callout>
				<Tails width="730" height="800" viewBox="0 0 730 800">
					<path d="M380 436H406L653 789zM512 436H541L653 541z" />
					<path d="M713 556h4l2 208 5-2-9 22-9-22 6 2z" />
				</Tails>
				<Bubble $x={299} $y={352} $w={288} $h={89}>Сдвигаем границу<br />обрезки</Bubble>
			</Callout>
		</Page>
	</>
);

export default App;

const GlobalStyle = createGlobalStyle`
	* {
		box-sizing: border-box;
	}
	body {
		margin: 0;
		background: #f0f0f0;
		color: #333;
		font: 14px/20px 'Open Sans', 'Noto Sans', sans-serif;
	}
	button, select, input {
		margin: 0;
		padding: 0;
		border: 0;
		background: none;
		color: inherit;
		font: inherit;
	}
`;

const Svg = styled.svg`
	display: block;
	flex: none;
`;

const Page = styled.div`
	position: relative;
	display: flex;
	flex-direction: column;
	height: 100vh;
	overflow: hidden;
	padding-bottom: 2px;
`;

const RibbonBar = styled.header`
	display: flex;
	background: #ededed;
	border-bottom: 1px solid #bfc4bb;
`;
const Panel = styled.section`
	display: flex;
	flex-direction: column;
	flex: none;
	width: ${(p) => p.$w}px;
	border-right: 1px solid #dfe8d4;
`;
const LastPanel = styled.section`
	display: flex;
	flex: 1;
	flex-direction: column;
	align-items: flex-end;
	gap: 16px;
	overflow: hidden;
	max-width: 14px;
`;
const PanelBody = styled.div`
	display: flex;
	height: 67px;
	padding-left: ${(p) => p.$pad || 0}px;
`;
const Caption = styled.div`
	display: flex;
	align-items: center;
	justify-content: center;
	gap: 6px;
	height: 24px;
	color: #444;
`;
const Stack = styled.div`
	display: flex;
	flex: 1;
	flex-direction: column;
	align-items: center;
	gap: ${(p) => p.$gap}px;
`;
const IconButton = styled.button`
	display: flex;
	align-items: center;
	justify-content: center;
`;
const ModifyButton = styled.button`
	display: flex;
	flex-direction: column;
	align-items: center;
	gap: 13px;
	width: 74px;
	height: 64px;
	border: 1px solid #1a6fc4;
	border-width: 0 1px 1px 0;
	background: linear-gradient(#d5e8fa, #a8d0f5);
	color: #444;
`;
const PressedButton = styled(IconButton)`
	width: 47px;
	height: 41px;
	border: 1px solid #1a6fc4;
	background: linear-gradient(#c5def5, #a8d0f5);
`;
const PasteButton = styled.button`
	display: flex;
	flex-direction: column;
	align-items: center;
	gap: 6px;
	width: 89px;
	height: 64px;
	color: #aaa;
`;
const SmallGrid = styled.div`
	display: grid;
	grid-template-columns: repeat(${(p) => p.$cols}, 31px);
	grid-auto-rows: 31px;
	padding-top: 4px;
`;
const LargeGrid = styled.div`
	display: grid;
	grid-template-columns: repeat(${(p) => p.$cols}, 50px);
	grid-template-rows: 16px 50px;

	> :nth-child(-n + ${(p) => p.$cols}) {
		align-items: flex-start;
	}
`;
const CommandColumn = styled.div`
	display: flex;
	flex-direction: column;
	align-items: flex-start;
	width: 123px;
	padding-top: 4px;
`;
const CommandButton = styled.button`
	display: flex;
	align-items: center;
	gap: 7px;
	height: 31px;
	color: #444;

	> :last-child {
		margin-left: 4px;
	}
`;
const CaretSlot = styled.div`
	display: flex;
	align-items: center;
	height: ${(p) => (p.$low ? 84 : 40)}px;
	padding: 0 4px;
`;

const OptionsBar = styled.div`
	flex: none;
	height: 33px;
	padding: 7px 6px 0;
	background: #e4efd8;
	color: #222;
`;

const Workspace = styled.main`
	display: flex;
	flex: 1;
	min-height: 0;
	border-top: 2px solid #c9c9c9;
	border-bottom: 1px solid #c9c9c9;
`;

const Palette = styled.aside`
	display: flex;
	flex-direction: column;
	flex: none;
	width: 322px;
	padding: 0 4px 3px 0;
	border-right: 2px solid #c9c9c9;
	background: #ededed;
`;
const PaletteHeader = styled.div`
	display: flex;
	align-items: center;
	justify-content: space-between;
	height: 25px;
	padding-right: 2px;
	color: #444;
`;
const TypeSelector = styled.button`
	display: flex;
	align-items: center;
	gap: 5px;
	height: 86px;
	padding: 2px 1px;
	border: 1px solid #dcdcdc;
	border-left: 0;
	background: linear-gradient(#f7f7f7, #e9e9e9);
	color: #a3a3a3;
	text-align: left;
`;
const TypePreview = styled.span`
	display: flex;
	align-items: center;
	justify-content: center;
	width: 82px;
	height: 82px;
	border: 1px solid #dadada;
`;
const TypeName = styled.span`
	flex: 1;
`;
const FilterRow = styled.div`
	display: flex;
	align-items: flex-start;
	gap: 5px;
	height: 31px;
	padding: 2px 0 1px;
`;
const FilterSelect = styled.select`
	width: 185px;
	height: 28px;
	border: 1px solid #bdbdbd;
	border-left: 0;
	appearance: none;
	background: #c9c9c9 url("data:image/svg+xml,%3Csvg xmlns='http://www.w3.org/2000/svg' width='10' height='6'%3E%3Cpath d='M1 1l4 4 4-4' fill='none' stroke='%23999'/%3E%3C/svg%3E") no-repeat 169px 11px;
	color: #787878;
`;
const EditTypeButton = styled.button`
	display: flex;
	align-items: center;
	gap: 5px;
	height: 25px;
	color: #a3a3a3;
`;

const PropertyArea = styled.div`
	display: flex;
	flex: 1;
	min-height: 0;
`;
const TableClip = styled.div`
	flex: 1;
	overflow: hidden;
	background: #f0f0f0;
`;
const PropertyTable = styled.table`
	width: 296px;
	table-layout: fixed;
	border-spacing: 0;
	white-space: nowrap;

	td {
		height: 24px;
		padding: 0 0 1px;
		overflow: hidden;
	}
`;
const dotted = css`
	border-right: 1px dotted #777;
	border-bottom: 1px dotted #777;
`;
const highlight = css`
	background: #f0a050;
	color: #3a1200;
`;
const NameCell = styled.td`
	&& {
		padding-left: 7px;
	}
	${dotted}
	color: ${(p) => (p.$muted ? '#858585' : '#333')};
	${(p) => p.$active && highlight}
`;
const ValueCell = styled.td`
	&& {
		padding: ${(p) => (p.$flush ? '0 0 0 1px' : '0 0 1px 3px')};
	}
	${dotted}
	color: ${(p) => (p.$muted ? '#777' : '#333')};
	${(p) => p.$active && highlight}
`;
const LinkCell = styled.td`
	${dotted}
`;
const GroupCell = styled.td`
	&& {
		padding: 0;
	}
	background: #dadada;
	color: #222;
`;
const GroupTitle = styled.div`
	display: flex;
	align-items: flex-start;
	justify-content: space-between;
	padding-right: 6px;
	line-height: 24px;

	> svg {
		margin-top: 4px;
	}
`;
const ValueButton = styled.button`
	display: block;
	width: 80px;
	height: 22px;
	border: 1px solid #bebebe;
	background: #cbcbcb;
	color: #8b8b8b;
	line-height: 20px;
`;
const CheckBox = styled.input`
	display: block;
	appearance: none;
	width: 16px;
	height: 16px;
	border: 1px solid ${(p) => (p.$active ? '#c67a33' : '#c4c4c4')};
	background: ${(p) => (p.$active ? 'transparent' : '#fff')};

	&:checked::after {
		content: '';
		display: block;
		width: 9px;
		height: 5px;
		margin: 3px 2px;
		border: solid ${(p) => (p.$active ? '#c67a33' : '#bbb')};
		border-width: 0 0 1px 1px;
		transform: rotate(-45deg);
	}
`;

const ScrollTrack = styled.div`
	display: flex;
	flex-direction: column;
	align-items: center;
	justify-content: space-between;
	width: 19px;
	padding: 5px 0;
	background: #efefef;
`;
const ScrollThumb = styled.div`
	width: 19px;
	height: 280px;
	margin: 95px 0 auto;
	background: #cbcbcb;
`;
const PaletteFooter = styled.div`
	display: flex;
	align-items: center;
	justify-content: space-between;
	height: 29px;
`;
const HelpLink = styled.a`
	color: #0f66c8;
`;
const ApplyButton = styled.button`
	width: 87px;
	height: 26px;
	border: 1px solid #bebebe;
	background: #cbcbcb;
	color: #8b8b8b;
`;

const ViewArea = styled.section`
	display: flex;
	flex: 1;
	flex-direction: column;
	min-width: 0;
	background: #fff;
`;
const Tabs = styled.nav`
	display: flex;
	height: 25px;
	background: #c9c9c9;
	color: #555;
`;
const Tab = styled.button`
	display: flex;
	align-items: center;
	gap: 9px;
	flex: none;
	width: ${(p) => (p.$active ? 272 : 307)}px;
	padding: 0 6px;
	white-space: nowrap;
	${(p) =>
		p.$active &&
		css`
			background: #fff;
			color: #333;
			font-weight: 700;
		`}
`;
const Canvas = styled.div`
	flex: 1;
	min-height: 0;
	overflow: hidden;
`;
const ViewBar = styled.footer`
	display: flex;
	align-items: center;
	gap: 5px;
	height: 22px;
	margin: 0 0 3px 2px;
	border-bottom: 1px solid #c9c9c9;
	background: #efefef;
`;
const ScaleButton = styled.button`
	width: 87px;
	padding-left: 4px;
	color: #222;
`;
const ViewButton = styled(IconButton)`
	width: 20px;
	height: 20px;
`;
const HorizontalThumb = styled.div`
	width: 21px;
	height: 19px;
	margin: 0 6px 0 auto;
	background: #cbcbcb;
`;

const TagText = styled.text`
	fill: #000;
	font: 6px 'Liberation Sans', sans-serif;
	text-anchor: middle;
	text-decoration: ${(p) => (p.$line ? 'underline' : 'none')};
`;
const NoteText = styled.text`
	fill: #888;
	font: ${(p) => p.$size || 6}px 'Liberation Sans', sans-serif;
	text-decoration: ${(p) => (p.$line ? 'underline' : 'none')};
`;

const Callout = styled.div`
	position: absolute;
	inset: 0;
	filter: drop-shadow(3px 3px 3px rgba(0, 0, 0, 0.6));
	pointer-events: none;
`;
const Tails = styled.svg`
	position: absolute;
	top: 0;
	left: 0;
	fill: #5e7db7;
`;
const Bubble = styled.div`
	position: absolute;
	left: ${(p) => p.$x}px;
	top: ${(p) => p.$y}px;
	display: flex;
	align-items: center;
	justify-content: center;
	width: ${(p) => p.$w}px;
	height: ${(p) => p.$h}px;
	border-radius: 11px;
	background: #5e7db7;
	color: #fff;
	font: 27px/33px Roboto, sans-serif;
	text-align: center;
`;
